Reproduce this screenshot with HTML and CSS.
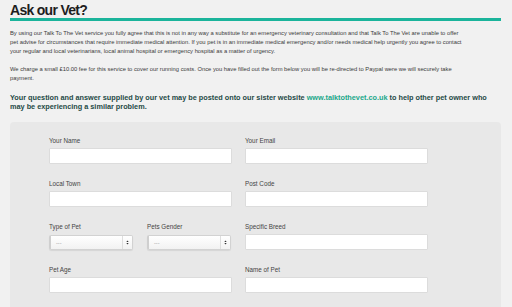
FILE: index.html
```html
<!DOCTYPE html>
<html>
<head>
<meta charset="utf-8">
<link rel="stylesheet" href="styles.css">
</head>
<body>
<div class="page">
  <h1 class="title">Ask our Vet?</h1>
  <p class="intro">By using our Talk To The Vet service you fully agree that this is not in any way a substitute for an emergency veterinary consultation and that Talk To The Vet are unable to offer<br>pet advise for circumstances that require immediate medical attention. If you pet is in an immediate medical emergency and/or needs medical help urgently you agree to contact<br>your regular and local veterinarians, local animal hospital or emergency hospital as a matter of urgency.</p>
  <p class="intro">We charge a small £10.00 fee for this service to cover our running costs. Once you have filled out the form below you will be re-directed to Paypal were we will securely take<br>payment.</p>
  <p class="notice">Your question and answer supplied by our vet may be posted onto our sister website <span class="link">www.talktothevet.co.uk</span> to help other pet owner who<br>may be experiencing a similar problem.</p>
  <div class="form">
    <div class="field"><label class="lbl">Your Name</label><input class="txt" type="text"></div>
    <div class="field"><label class="lbl">Your Email</label><input class="txt" type="text"></div>
    <div class="field"><label class="lbl">Local Town</label><input class="txt" type="text"></div>
    <div class="field"><label class="lbl">Post Code</label><input class="txt" type="text"></div>
    <div class="pair">
      <div class="field"><label class="lbl">Type of Pet</label>
        <div class="sel"><span class="sel-val">---</span><span class="sel-arrow"><svg width="5" height="8" viewBox="0 0 5 8"><path d="M2.5 0.5 L4.5 3 L0.5 3 Z M2.5 7.5 L4.5 5 L0.5 5 Z" fill="#333"/></svg></span></div>
      </div>
      <div class="field"><label class="lbl">Pets Gender</label>
        <div class="sel"><span class="sel-val">---</span><span class="sel-arrow"><svg width="5" height="8" viewBox="0 0 5 8"><path d="M2.5 0.5 L4.5 3 L0.5 3 Z M2.5 7.5 L4.5 5 L0.5 5 Z" fill="#333"/></svg></span></div>
      </div>
    </div>
    <div class="field"><label class="lbl">Specific Breed</label><input class="txt" type="text"></div>
    <div class="field"><label class="lbl">Pet Age</label><input class="txt" type="text"></div>
    <div class="field"><label class="lbl">Name of Pet</label><input class="txt" type="text"></div>
  </div>
</div>
</body>
</html>
```
FILE: styles.css
```css
html, body {
  margin: 0;
  padding: 0;
  background: #f1f1f1;
  font-family: "Liberation Sans", Arial, sans-serif;
  overflow: hidden;
}
.page {
  width: 491px;
  padding: 0 11px 0 10px;
}
.title {
  margin: 0;
  padding-top: 2px;
  font-size: 14px;
  line-height: 16px;
  letter-spacing: -0.7px;
  font-weight: bold;
  color: #1e1e1e;
  border-bottom: 3px solid #1bb49b;
  height: 16px;
}
.intro {
  margin: 8px 0 0;
  font-size: 5.8px;
  line-height: 9px;
  color: #3a3a3a;
  white-space: nowrap;
}
.intro + .intro {
  margin-top: 9px;
}
.notice {
  margin: 10px 0 0;
  font-size: 7.3px;
  line-height: 9px;
  font-weight: bold;
  color: #1f4a46;
  white-space: nowrap;
}
.link {
  color: #1aa88a;
}
.form {
  margin-top: 11px;
  background: #e8e8e8;
  border-radius: 4px 4px 0 0;
  padding: 15px 0 20px 39px;
  display: grid;
  grid-template-columns: 183px 183px;
  column-gap: 13px;
  row-gap: 16px;
}
.field {
  display: flex;
  flex-direction: column;
}
.lbl {
  font-size: 6.3px;
  line-height: 8px;
  color: #444;
  margin-bottom: 3px;
}
.txt {
  box-sizing: border-box;
  height: 16px;
  width: 100%;
  margin: 0;
  border: 1px solid #dcdcdc;
  border-radius: 1px;
  background: #fff;
}
.pair {
  display: grid;
  grid-template-columns: 84px 84px;
  column-gap: 14px;
}
.sel {
  box-sizing: border-box;
  height: 15px;
  margin-top: 1px;
  border: 1px solid #d2d2d2;
  border-left: 2px solid #cfcfcf;
  border-radius: 2px;
  background: linear-gradient(#ffffff, #f2f2f2);
  display: flex;
  align-items: center;
  box-shadow: 0 1px 1px rgba(0,0,0,0.08);
}
.sel-val {
  flex: 1;
  font-size: 5.5px;
  color: #9a9a9a;
  padding-left: 5px;
}
.sel-arrow {
  width: 9px;
  height: 100%;
  border-left: 1px solid #dedede;
  display: flex;
  align-items: center;
  justify-content: center;
}
.sel-arrow svg {
  display: block;
  width: 3px;
  height: 5px;
}
```
